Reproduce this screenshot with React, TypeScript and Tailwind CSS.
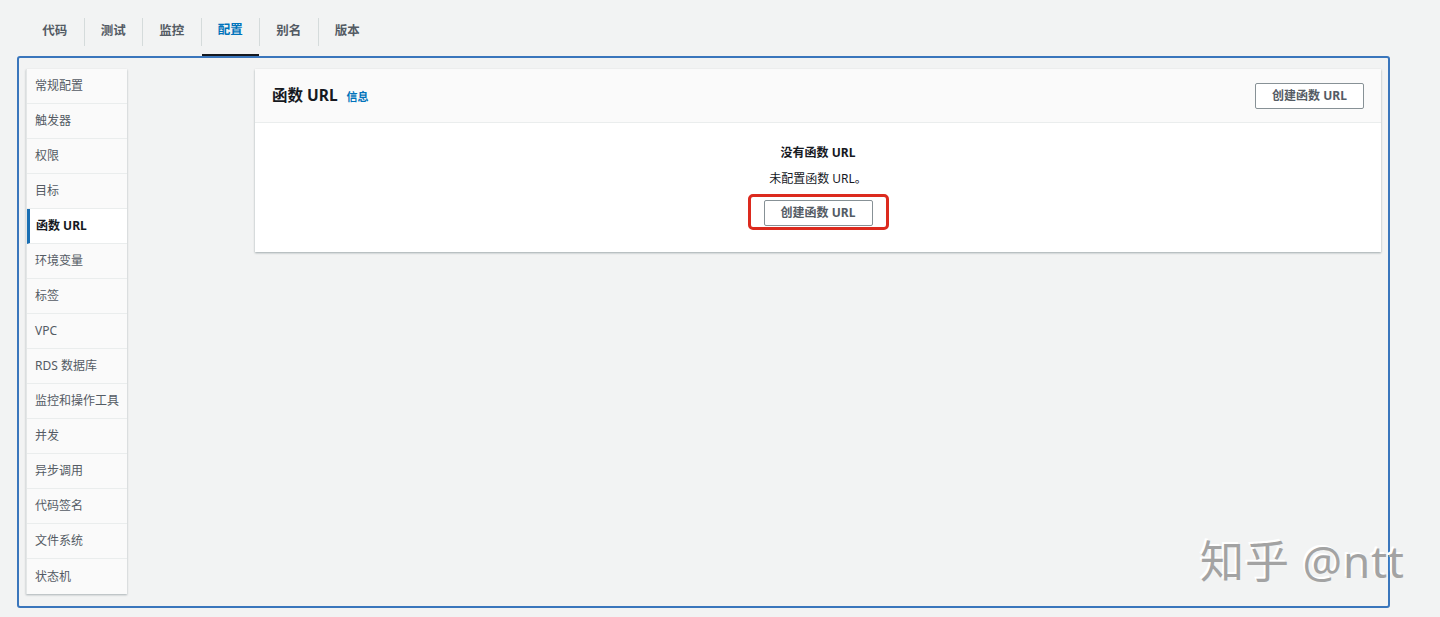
import React from 'react';

const tabs = ['代码', '测试', '监控', '配置', '别名', '版本'];

const sideItems = [
  '常规配置',
  '触发器',
  '权限',
  '目标',
  '函数 URL',
  '环境变量',
  '标签',
  'VPC',
  'RDS 数据库',
  '监控和操作工具',
  '并发',
  '异步调用',
  '代码签名',
  '文件系统',
  '状态机',
];

const font = { fontFamily: '"Noto Sans", "Noto Sans CJK SC", sans-serif' };

function Tabs() {
  return (
    <div className="flex h-[48px] pl-[26px] mt-[8px]">
      {tabs.map((t, i) => {
        const active = t === '配置';
        return (
          <div key={t} className="flex items-center">
            {i > 0 && <div className="w-px h-[28px] bg-[#d5dbdb]" />}
            <div
              className={
                active
                  ? 'h-full w-[57.5px] flex items-center justify-center pb-[2px] text-[12.5px] font-bold text-[#0073bb] border-b-[2px] border-[#16191f]'
                  : 'h-full w-[57.5px] flex items-center justify-center pb-[2px] text-[12.5px] font-bold text-[#545b64]'
              }
            >
              {t}
            </div>
          </div>
        );
      })}
    </div>
  );
}

function Sidebar() {
  return (
    <div className="w-[101px] shrink-0 self-start bg-[#fafafa] shadow-[0_1px_2px_rgba(0,28,36,0.3)] border-l border-[#e3e6e6]">
      {sideItems.map((s) => {
        const active = s === '函数 URL';
        return (
          <div
            key={s}
            className={
              active
                ? 'h-[35px] flex items-center bg-white border-l-[3px] border-[#1a6fb3] pl-[6px] text-[12px] font-bold text-[#16191f] border-b border-b-[#eaeded]'
                : 'h-[35px] flex items-center pl-[8px] text-[12px] text-[#545b64] border-b border-[#eaeded] last:border-b-0'
            }
          >
            {s}
          </div>
        );
      })}
    </div>
  );
}

function Card() {
  return (
    <div className="ml-[128px] flex-1 self-start bg-white shadow-[0_1px_2px_rgba(0,28,36,0.35)]">
      <div className="h-[54px] bg-[#fafafa] border-b border-[#eaeded] flex items-center justify-between pl-[17px] pr-[17px]">
        <div className="flex items-baseline">
          <span className="text-[15.5px] font-bold text-[#16191f]">函数 URL</span>
          <span className="ml-[9px] text-[11px] font-bold text-[#0073bb]">信息</span>
        </div>
        <button className="w-[109px] h-[26px] mt-[1px] border border-[#879196] rounded-[2px] bg-white text-[12px] font-bold text-[#545b64]">
          创建函数 URL
        </button>
      </div>
      <div className="h-[129px] flex flex-col items-center pt-[21px]">
        <div className="text-[12px] font-bold text-[#16191f] leading-[18px]">没有函数 URL</div>
        <div className="mt-[8px] text-[12px] text-[#16191f] leading-[18px]">未配置函数 URL。</div>
        <div className="mt-[6px] border-[3px] border-[#dc2a1e] rounded-[5px] px-[13px] py-[1.5px]">
          <button className="w-[109px] h-[26px] border border-[#879196] rounded-[2px] bg-white text-[12px] font-bold text-[#545b64]">
            创建函数 URL
          </button>
        </div>
      </div>
    </div>
  );
}

export default function App() {
  return (
    <div className="relative w-[1440px] h-[617px] overflow-hidden bg-[#f2f3f3]" style={font}>
      <Tabs />
      <div className="ml-[17px] mr-[50px] h-[552px] border-2 border-[#3a76bc] rounded-[3px] pl-[7px] pr-[7px] pt-[11px] flex">
        <Sidebar />
        <Card />
      </div>
      <div
        className="absolute left-[1200px] top-[528px] text-[44px] text-[#a3a3a3] tracking-[1px] [text-shadow:-2px_-2px_0_#ffffff]"
        style={font}
      >
        知乎 @ntt
      </div>
    </div>
  );
}
